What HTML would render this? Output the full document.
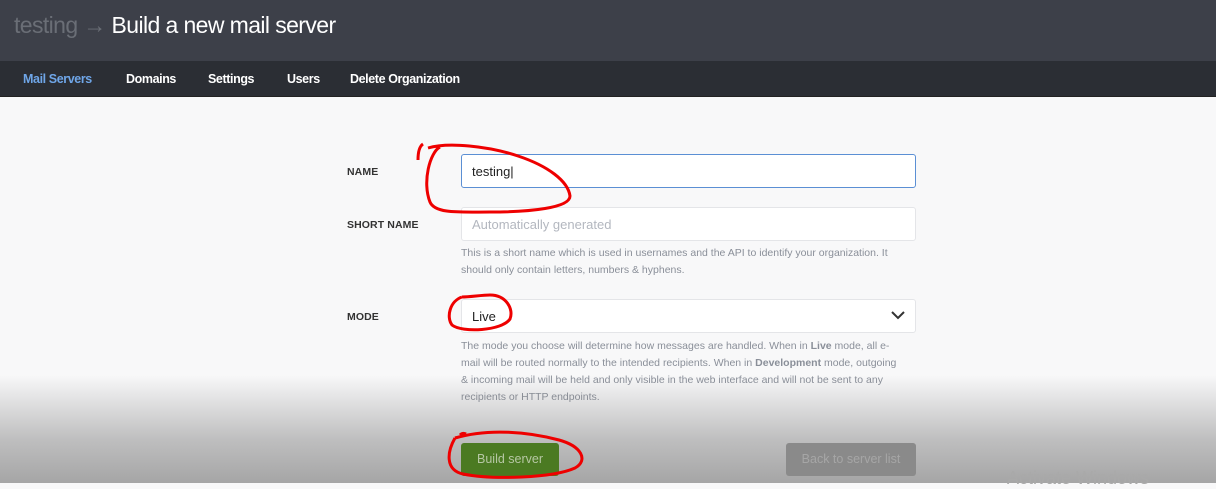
<!DOCTYPE html>
<html><head><style>
*{margin:0;padding:0;box-sizing:border-box}
body{width:1216px;height:483px;overflow:hidden;background:#f8f8f9;font-family:"Liberation Sans",sans-serif;position:relative}
.hd{position:absolute;left:0;top:0;width:1216px;height:61px;background:#3d4049}
.hd .t{position:absolute;left:14px;top:12px;font-size:23px;color:#fff;letter-spacing:-0.6px}
.hd .t span{color:#6a6e76}
.nav{position:absolute;left:0;top:61px;width:1216px;height:36px;background:#2b2e34;border-bottom:1px solid #222}
.nav a{position:absolute;top:11px;font-size:12.5px;font-weight:bold;color:#fff;letter-spacing:-0.4px}
.lbl{position:absolute;left:347px;font-size:10.5px;color:#333;font-weight:bold;letter-spacing:0.1px}
.inp{position:absolute;left:461px;width:455px;height:34px;background:#fff;border:1px solid #e4e5e8;border-radius:3px;font-size:13px;padding:9px 10px;color:#222}
.help{position:absolute;left:461px;width:440px;font-size:10.5px;color:#8a8f99;line-height:17px}
.btn{position:absolute;top:443px;height:33px;border-radius:3px;font-size:12.5px;text-align:center;line-height:33px}
.ov{position:absolute;left:0;top:375px;width:1216px;height:108px;background:linear-gradient(#fff0,rgba(120,120,120,.45) 60%,rgba(110,110,110,.6))}
</style></head><body>
<div class="hd"><div class="t"><span>testing →</span> Build a new mail server</div></div>
<div class="nav">
<a style="left:23px;color:#6fa6e8">Mail Servers</a>
<a style="left:126px">Domains</a>
<a style="left:208px">Settings</a>
<a style="left:287px">Users</a>
<a style="left:350px">Delete Organization</a>
</div>
<div class="lbl" style="top:166px">NAME</div>
<div class="inp" style="top:154px;border:1px solid #5b8fd4">testing|</div>
<div class="lbl" style="top:219px">SHORT NAME</div>
<div class="inp" style="top:207px;color:#b3b7bf">Automatically generated</div>
<div class="help" style="top:245px;width:445px">This is a short name which is used in usernames and the API to identify your organization. It should only contain letters, numbers &amp; hyphens.</div>
<div class="lbl" style="top:311px">MODE</div>
<div class="inp" style="top:299px">Live
<svg style="position:absolute;right:10px;top:11px" width="14" height="9" viewBox="0 0 14 9"><path d="M1 1l6 6 6-6" fill="none" stroke="#333" stroke-width="2"/></svg></div>
<div class="help" style="top:338px">The mode you choose will determine how messages are handled. When in <b>Live</b> mode, all e-mail will be routed normally to the intended recipients. When in <b>Development</b> mode, outgoing &amp; incoming mail will be held and only visible in the web interface and will not be sent to any recipients or HTTP endpoints.</div>
<div class="ov"></div>
<div class="btn" style="left:461px;width:98px;background:#4b7a22;color:#b6c7a4">Build server</div>
<div class="btn" style="left:786px;width:130px;background:#8a8a8a;color:#a6a6a6">Back to server list</div>
<div style="position:absolute;left:1007px;top:468px;font-size:18px;color:#a9a9a9">Activate Windows</div>
<svg style="position:absolute;left:0;top:0" width="1216" height="483" fill="none" stroke="#e00" stroke-width="3">
<path d="M418 160c0-10 2-14 5-16M428 148c20-6 60-2 90 8 30 10 50 25 52 40 0 12-40 16-80 16-30 0-55 2-60-10-8-20 0-50 10-55"/>
<path d="M462 297c-12 4-16 20-10 28 10 8 50 6 58-6 4-10-4-24-20-24-8 0-20 2-28 2"/>
<path d="M460 435c2-2 4-2 6-1M455 438c-8 14-10 32 8 36 30 6 90 4 112-6 14-8 6-22-16-28-30-8-70-12-104-2"/>
</svg>
</body></html>
